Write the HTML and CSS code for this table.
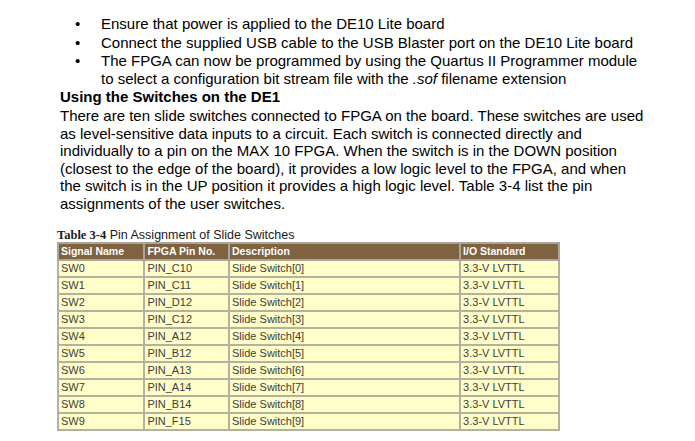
FILE: index.html
```html
<!DOCTYPE html>
<html>
<head>
<meta charset="utf-8">
<link rel="stylesheet" href="styles.css">
</head>
<body>
<div class="page">
  <ul class="steps">
    <li><span class="dot">•</span><span>Ensure that power is applied to the DE10 Lite board</span></li>
    <li><span class="dot">•</span><span>Connect the supplied USB cable to the USB Blaster port on the DE10 Lite board</span></li>
    <li><span class="dot">•</span><span>The FPGA can now be programmed by using the Quartus II Programmer module<br>to select a configuration bit stream file with the <em>.sof</em> filename extension</span></li>
  </ul>
  <h2 class="heading">Using the Switches on the DE1</h2>
  <p class="body-text">There are ten slide switches connected to FPGA on the board. These switches are used<br>as level-sensitive data inputs to a circuit. Each switch is connected directly and<br>individually to a pin on the MAX 10 FPGA. When the switch is in the DOWN position<br>(closest to the edge of the board), it provides a low logic level to the FPGA, and when<br>the switch is in the UP position it provides a high logic level. Table 3-4 list the pin<br>assignments of the user switches.</p>
  <div class="caption"><b>Table 3-4</b> Pin Assignment of Slide Switches</div>
  <table class="pins">
    <thead>
      <tr><th class="c1">Signal Name</th><th class="c2">FPGA Pin No.</th><th class="c3">Description</th><th class="c4">I/O Standard</th></tr>
    </thead>
    <tbody>
      <tr><td>SW0</td><td>PIN_C10</td><td>Slide Switch[0]</td><td>3.3-V LVTTL</td></tr>
      <tr><td>SW1</td><td>PIN_C11</td><td>Slide Switch[1]</td><td>3.3-V LVTTL</td></tr>
      <tr><td>SW2</td><td>PIN_D12</td><td>Slide Switch[2]</td><td>3.3-V LVTTL</td></tr>
      <tr><td>SW3</td><td>PIN_C12</td><td>Slide Switch[3]</td><td>3.3-V LVTTL</td></tr>
      <tr><td>SW4</td><td>PIN_A12</td><td>Slide Switch[4]</td><td>3.3-V LVTTL</td></tr>
      <tr><td>SW5</td><td>PIN_B12</td><td>Slide Switch[5]</td><td>3.3-V LVTTL</td></tr>
      <tr><td>SW6</td><td>PIN_A13</td><td>Slide Switch[6]</td><td>3.3-V LVTTL</td></tr>
      <tr><td>SW7</td><td>PIN_A14</td><td>Slide Switch[7]</td><td>3.3-V LVTTL</td></tr>
      <tr><td>SW8</td><td>PIN_B14</td><td>Slide Switch[8]</td><td>3.3-V LVTTL</td></tr>
      <tr><td>SW9</td><td>PIN_F15</td><td>Slide Switch[9]</td><td>3.3-V LVTTL</td></tr>
    </tbody>
  </table>
</div>
</body>
</html>
```
FILE: styles.css
```css
html, body {
  margin: 0;
  padding: 0;
  background: #ffffff;
}
.page {
  padding: 15px 0 0 60px;
  font-family: "Liberation Sans", Arial, sans-serif;
  font-size: 15px;
  line-height: 17.5px;
  color: #000;
}
.steps {
  list-style: none;
  margin: 0;
  padding: 0 0 0 15px;
}
.steps li {
  display: flex;
  margin-bottom: 1px;
}
.steps .dot {
  width: 26px;
  flex: none;
}
.steps em {
  font-style: italic;
}
.heading {
  margin: 0 0 1.5px 0;
  font-size: 15px;
  font-weight: bold;
  line-height: 17.5px;
}
.body-text {
  margin: 0;
}
.caption {
  margin: 17px 0 0 -3px;
  font-size: 12.5px;
  line-height: 13px;
  color: #1a1a1a;
}
.caption b {
  font-family: "Liberation Serif", "Times New Roman", serif;
  font-weight: bold;
}
.pins {
  margin: 0 0 0 -3px;
  border-collapse: collapse;
  font-size: 11px;
  line-height: 13px;
  width: 503px;
}
.pins th, .pins td {
  border: 2px solid #b3b1a2;
  text-align: left;
  padding: 1px 4px 1px 2px;
  height: 12.6px;
  white-space: nowrap;
}
.pins th {
  background: #7f623f;
  color: #ffffff;
  font-weight: bold;
  font-size: 10.5px;
  border-color: #a9a59a;
}
.pins td {
  background: #fffec9;
  color: #3d3d3d;
}
.pins .c1 { width: 79px; }
.pins .c2 { width: 77px; }
.pins .c3 { width: 229px; }
.pins .c4 { width: 92px; }
```
